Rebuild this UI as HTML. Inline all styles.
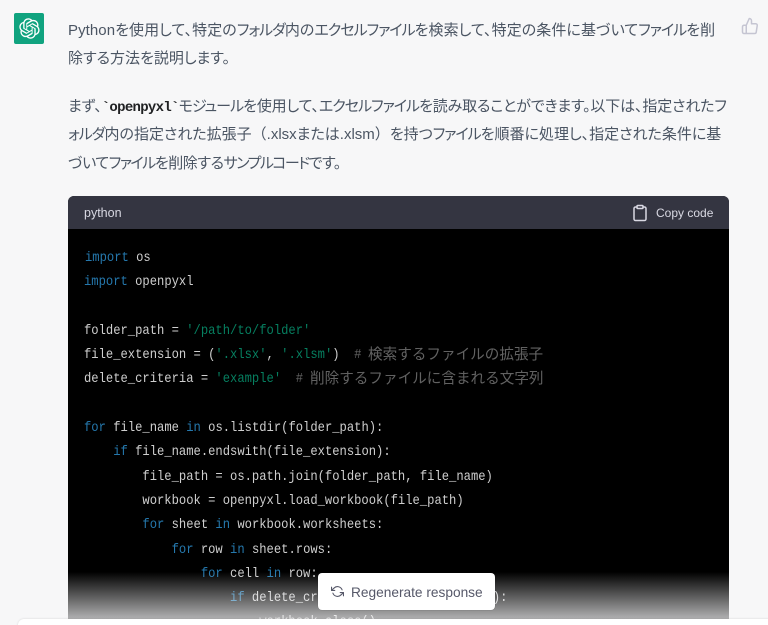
<!DOCTYPE html>
<html lang="ja">
<head>
<meta charset="utf-8">
<style>
html,body{margin:0;padding:0;width:768px;height:625px;overflow:hidden;background:#f7f7f8}
body{position:relative;font-family:"Liberation Sans","Noto Sans CJK JP",sans-serif}
.p{position:absolute;left:68px;white-space:pre;font-size:15px;line-height:24px;color:#4b5563;font-family:"Liberation Sans","Noto Sans CJK JP",sans-serif;font-feature-settings:"palt"}
.n{letter-spacing:-1px}
.w{font-feature-settings:normal}
.c{position:absolute;left:84px;white-space:pre;font-family:"Liberation Mono",monospace;font-size:14px;line-height:20px;color:#cfcfcf;transform:scaleX(.869);transform-origin:0 0}
.j{position:absolute;white-space:pre;font-family:"Noto Sans CJK JP",sans-serif;font-size:14.6px;line-height:20px;color:#626262}
.k{color:#2578ad}.s{color:#067f60}.h{color:#626262}
</style>
</head>
<body>
<div style="position:absolute;left:14px;top:13px;width:30px;height:31px;background:#10a37f;border-radius:2px">
<svg width="21" height="21" viewBox="0 0 41 41" style="position:absolute;left:4.5px;top:5px"><path fill="#fff" d="M37.5324 16.8707C37.9808 15.5241 38.1363 14.0974 37.9886 12.6859C37.8409 11.2744 37.3934 9.91076 36.676 8.68622C35.6126 6.83404 33.9882 5.3676 32.0373 4.4985C30.0864 3.62941 27.9098 3.40259 25.8215 3.85078C24.8796 2.7893 23.7219 1.94125 22.4257 1.36341C21.1295 0.785575 19.7249 0.491269 18.3058 0.500197C16.1708 0.495044 14.0893 1.16803 12.3614 2.42214C10.6335 3.67624 9.34853 5.44666 8.6917 7.47815C7.30085 7.76286 5.98686 8.3414 4.8377 9.17505C3.68854 10.0087 2.73073 11.0782 2.02839 12.312C0.956464 14.1591 0.498905 16.2988 0.721698 18.4228C0.944492 20.5467 1.83612 22.5449 3.268 24.1293C2.81966 25.4759 2.66413 26.9026 2.81182 28.3141C2.95951 29.7256 3.40701 31.0892 4.12437 32.3138C5.18791 34.1659 6.8123 35.6322 8.76321 36.5013C10.7141 37.3704 12.8907 37.5973 14.979 37.1492C15.9208 38.2107 17.0786 39.0587 18.3747 39.6366C19.6709 40.2144 21.0755 40.5087 22.4946 40.4998C24.6307 40.5054 26.7133 39.8321 28.4418 38.5772C30.1704 37.3223 31.4556 35.5506 32.1119 33.5179C33.5027 33.2332 34.8167 32.6547 35.9659 31.821C37.115 30.9874 38.0728 29.9178 38.7752 28.684C39.8458 26.8371 40.3023 24.6979 40.0789 22.5748C39.8556 20.4517 38.9639 18.4544 37.5324 16.8707ZM22.4978 37.8849C20.7443 37.8874 19.0459 37.2733 17.6994 36.1501C17.7601 36.117 17.8666 36.0586 17.936 36.0161L25.9004 31.4156C26.1003 31.3019 26.2663 31.137 26.3813 30.9378C26.4964 30.7386 26.5563 30.5124 26.5549 30.2825V19.0542L29.9213 20.998C29.9389 21.0068 29.9541 21.0198 29.9656 21.0359C29.977 21.052 29.9842 21.0707 29.9867 21.0902V30.3889C29.9842 32.375 29.1946 34.2791 27.7909 35.6841C26.3872 37.0892 24.4838 37.8806 22.4978 37.8849ZM6.39227 31.0064C5.51397 29.4888 5.19742 27.7107 5.49804 25.9832C5.55718 26.0187 5.66048 26.0818 5.73461 26.1244L13.699 30.7248C13.8975 30.8408 14.1233 30.902 14.3532 30.902C14.583 30.902 14.8088 30.8408 15.0073 30.7248L24.731 25.1103V28.9979C24.7321 29.0177 24.7283 29.0376 24.7199 29.0556C24.7115 29.0736 24.6988 29.0893 24.6829 29.1012L16.6317 33.7497C14.9096 34.7416 12.8643 35.0097 10.9447 34.4954C9.02506 33.9811 7.38785 32.7263 6.39227 31.0064ZM4.29707 13.6194C5.17156 12.0998 6.55279 10.9364 8.19885 10.3327C8.19885 10.4013 8.19491 10.5228 8.19491 10.6071V19.808C8.19351 20.0378 8.25334 20.2638 8.36823 20.4629C8.48312 20.6619 8.64893 20.8267 8.84863 20.9404L18.5723 26.5542L15.206 28.4979C15.1894 28.5089 15.1703 28.5155 15.1505 28.5173C15.1307 28.5191 15.1107 28.516 15.0924 28.5082L7.04046 23.8557C5.32135 22.8601 4.06716 21.2235 3.55289 19.3046C3.03862 17.3858 3.30624 15.3413 4.29707 13.6194ZM31.955 20.0556L22.2312 14.4411L25.5976 12.4981C25.6142 12.4872 25.6333 12.4805 25.6531 12.4787C25.6729 12.4769 25.6928 12.4801 25.7111 12.4879L33.7631 17.1364C34.9967 17.849 36.0017 18.8982 36.6606 20.1613C37.3194 21.4244 37.6047 22.849 37.4832 24.2684C37.3617 25.6878 36.8382 27.0432 35.9743 28.1759C35.1103 29.3086 33.9415 30.1717 32.6047 30.6641C32.6047 30.5947 32.6047 30.4733 32.6047 30.3889V21.188C32.6066 20.9586 32.5474 20.7328 32.4332 20.5338C32.319 20.3348 32.154 20.1698 31.955 20.0556ZM35.3055 15.0128C35.2464 14.9765 35.1431 14.9142 35.069 14.8717L27.1045 10.2712C26.906 10.1554 26.6803 10.0943 26.4504 10.0943C26.2206 10.0943 25.9948 10.1554 25.7963 10.2712L16.0726 15.8858V11.9982C16.0715 11.9783 16.0753 11.9585 16.0837 11.9405C16.0921 11.9225 16.1048 11.9068 16.1207 11.8949L24.1719 7.25025C25.4053 6.53903 26.8158 6.19376 28.2383 6.25482C29.6608 6.31589 31.0364 6.78077 32.2044 7.59508C33.3723 8.40939 34.2842 9.53945 34.8334 10.8531C35.3826 12.1667 35.5464 13.6095 35.3055 15.0128ZM14.2424 21.9419L10.8752 19.9981C10.8576 19.9893 10.8423 19.9763 10.8309 19.9602C10.8195 19.9441 10.8122 19.9254 10.8098 19.9058V10.6071C10.8107 9.18295 11.2173 7.78848 11.9819 6.58696C12.7466 5.38544 13.8377 4.42659 15.1275 3.82264C16.4173 3.21869 17.8524 2.99464 19.2649 3.1767C20.6775 3.35876 22.0089 3.93941 23.1034 4.85067C23.0427 4.88379 22.937 4.94215 22.8668 4.98473L14.9024 9.58517C14.7025 9.69878 14.5366 9.86356 14.4215 10.0626C14.3065 10.2616 14.2466 10.4877 14.2479 10.7175L14.2424 21.9419ZM16.071 17.9991L20.4018 15.4978L24.7325 17.9975V22.9985L20.4018 25.4983L16.071 22.9985V17.9991Z"/></svg>
</div>

<div class="p" style="top:19px;letter-spacing:.07px">Pythonを使用して、特定の<span class="n">フォルダ</span>内の<span class="n">エクセルファイル</span>を検索して、特定の条件に基づいて<span class="n">ファイル</span>を削</div>
<div class="p" style="top:47px">除する方法を説明します。</div>
<div class="p" style="top:95px;letter-spacing:-.14px">まず、<span style="font-family:'Liberation Mono',monospace;font-weight:700;font-size:14px;letter-spacing:-.7px;color:#202123">`openpyxl`</span><span class="n">モジュール</span>を使用して、<span class="n">エクセルファイル</span>を読み取ることができます。以下は、指定された<span class="n">フ</span></div>
<div class="p" style="top:123px"><span class="n">ォルダ</span>内の指定された拡張子<span class="w">（</span>.xlsxまたは.xlsm<span class="w">）</span>を持つ<span class="n">ファイル</span>を順番に処理し、指定された条件に基</div>
<div class="p" style="top:152px;letter-spacing:-.4px">づいて<span style="letter-spacing:-1.5px">ファイル</span>を削除する<span style="letter-spacing:-1.5px">サンプルコード</span>です。</div>

<svg width="18" height="18" viewBox="0 0 24 24" fill="none" stroke="#c5c5d2" stroke-width="2" stroke-linecap="round" stroke-linejoin="round" style="position:absolute;left:741px;top:17px"><path d="M14 9V5a3 3 0 0 0-3-3l-4 9v11h11.28a2 2 0 0 0 2-1.7l1.38-9a2 2 0 0 0-2-2.3zM7 22H4a2 2 0 0 1-2-2v-7a2 2 0 0 1 2-2h3"/></svg>

<div style="position:absolute;left:68px;top:196px;width:661px;height:440px;background:#000;border-radius:6px 6px 0 0;overflow:hidden">
<div style="height:33px;background:#343541"></div>
</div>
<div style="position:absolute;left:84px;top:206px;font-size:12.5px;line-height:14px;color:#d9d9e3">python</div>
<svg width="18" height="18" viewBox="0 0 24 24" fill="none" stroke="#d9d9e3" stroke-width="2" stroke-linecap="round" stroke-linejoin="round" style="position:absolute;left:631px;top:204px"><path d="M16 4h2a2 2 0 0 1 2 2v14a2 2 0 0 1-2 2H6a2 2 0 0 1-2-2V6a2 2 0 0 1 2-2h2"/><rect x="8" y="2" width="8" height="4" rx="1"/></svg>
<div style="position:absolute;left:656px;top:206px;font-size:12px;line-height:14px;color:#d9d9e3">Copy code</div>

<div class="c" style="left:85px;top:248px"><span class="k">import</span> os</div>
<div class="c" style="top:272px"><span class="k">import</span> openpyxl</div>
<div class="c" style="top:321px">folder_path = <span class="s">'/path/to/folder'</span></div>
<div class="c" style="top:345px">file_extension = (<span class="s">'.xlsx'</span>, <span class="s">'.xlsm'</span>)  <span class="h">#</span></div>
<div class="j" style="left:368px;top:344px">検索するファイルの拡張子</div>
<div class="c" style="top:369px">delete_criteria = <span class="s">'example'</span>  <span class="h">#</span></div>
<div class="j" style="left:310px;top:368px">削除するファイルに含まれる文字列</div>
<div class="c" style="top:418px"><span class="k">for</span> file_name <span class="k">in</span> os.listdir(folder_path):</div>
<div class="c" style="top:442px">    <span class="k">if</span> file_name.endswith(file_extension):</div>
<div class="c" style="top:467px">        file_path = os.path.join(folder_path, file_name)</div>
<div class="c" style="top:491px">        workbook = openpyxl.load_workbook(file_path)</div>
<div class="c" style="top:515px">        <span class="k">for</span> sheet <span class="k">in</span> workbook.worksheets:</div>
<div class="c" style="top:540px">            <span class="k">for</span> row <span class="k">in</span> sheet.rows:</div>
<div class="c" style="top:564px">                <span class="k">for</span> cell <span class="k">in</span> row:</div>
<div class="c" style="top:588px">                    <span class="k">if</span> delete_criteria <span class="k">in</span> str(cell.value):</div>
<div class="c" style="top:612px">                        workbook.close()</div>

<div style="position:absolute;left:0;top:572px;width:768px;height:53px;background:linear-gradient(to bottom,rgba(247,247,248,0),rgba(247,247,248,.72) 47px)"></div>

<div style="position:absolute;left:318px;top:573px;width:177px;height:37px;background:#fff;border-radius:4px;box-shadow:0 0 1px rgba(0,0,0,.3)">
<svg width="13" height="13" viewBox="0 0 24 24" fill="none" stroke="#565869" stroke-width="2" stroke-linecap="round" stroke-linejoin="round" style="position:absolute;left:12.5px;top:11.5px"><polyline points="1 4 1 10 7 10"/><polyline points="23 20 23 14 17 14"/><path d="M20.49 9A9 9 0 0 0 5.64 5.64L1 10m22 4l-4.64 4.36A9 9 0 0 1 3.51 15"/></svg>
<div style="position:absolute;left:33px;top:12px;font-size:13.7px;line-height:16px;color:#565869;white-space:pre">Regenerate response</div>
</div>

<div style="position:absolute;left:18px;top:619px;width:760px;height:20px;background:#fff;border-radius:6px 0 0 0;box-shadow:0 0 2px rgba(0,0,0,.15)"></div>
</body>
</html>
